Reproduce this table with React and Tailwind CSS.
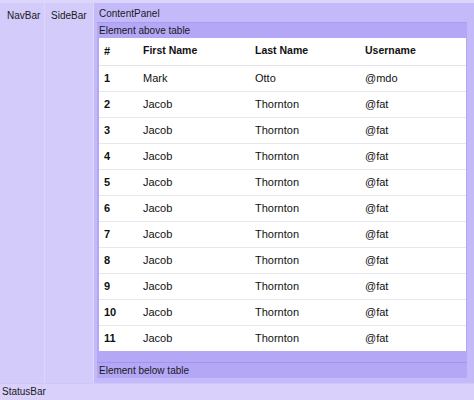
import React from 'react'

const rows = [
    { id: 1, first: 'Mark', last: 'Otto', user: '@mdo' },
    ...Array.from({ length: 10 }, (_, i) => ({ id: i + 2, first: 'Jacob', last: 'Thornton', user: '@fat' })),
]

function App() {
    return (
        <div className="h-[400px] w-[474px] flex flex-col bg-[#dcd5fc] text-[#1a1a1a] font-['Liberation_Sans',Arial,sans-serif] text-[10px] overflow-hidden">
            <div className="flex flex-1 min-h-0 pt-[3px]">
                <nav className="w-[45px] shrink-0 bg-[#d3cbfa] border-r border-[#ddd7fc] pl-[7px] pt-[6px] leading-[14px]">
                    NavBar
                </nav>
                <aside className="w-[49px] shrink-0 bg-[#d3cbfa] border-r border-[#ddd7fc] pl-[6px] pt-[6px] leading-[14px]">
                    SideBar
                </aside>

                <main className="flex-1 min-w-0 flex flex-col bg-[#c5baf9] pl-[3px] pr-[7px] pb-[5px]">
                    <div className="h-[19px] shrink-0 pl-[2px] pt-[4px] leading-[14px]">ContentPanel</div>
                    <div className="h-[16px] shrink-0 bg-[#b3a7f6] border-t border-[#a99cf2] pl-[2px] leading-[15px]">
                        Element above table
                    </div>

                    <div className="shrink-0 bg-[#b3a7f6] pl-[2px] pr-[1px]">
                        <table className="w-full bg-white border-collapse text-[11px] text-[#111]">
                            <thead>
                                <tr className="h-[27px] border-b border-[#e4e4e8]">
                                    <th className="w-[39px] pl-[5px] text-left font-bold">#</th>
                                    <th className="w-[112px] pl-[5px] text-left font-bold text-[10.5px]">First Name</th>
                                    <th className="w-[110px] pl-[5px] text-left font-bold text-[10.5px]">Last Name</th>
                                    <th className="pl-[5px] text-left font-bold text-[10.5px]">Username</th>
                                </tr>
                            </thead>
                            <tbody>
                                {rows.map((r) => (
                                    <tr key={r.id} className="h-[26px] border-b border-[#e8e8ec] last:border-b-0">
                                        <td className="pl-[5px] font-bold">{r.id}</td>
                                        <td className="pl-[5px]">{r.first}</td>
                                        <td className="pl-[5px]">{r.last}</td>
                                        <td className="pl-[5px]">{r.user}</td>
                                    </tr>
                                ))}
                            </tbody>
                        </table>
                        <div className="h-[11px]"></div>
                    </div>

                    <div className="h-[16px] shrink-0 bg-[#b3a7f6] border-t border-[#a295ef] pl-[2px] leading-[15px]">
                        Element below table
                    </div>
                </main>
            </div>

            <footer className="h-[17px] shrink-0 bg-[#d9d1fb] border-t border-[#cfc6fa] pl-[2px] leading-[16px]">
                StatusBar
            </footer>
        </div>
    )
}

export default App
